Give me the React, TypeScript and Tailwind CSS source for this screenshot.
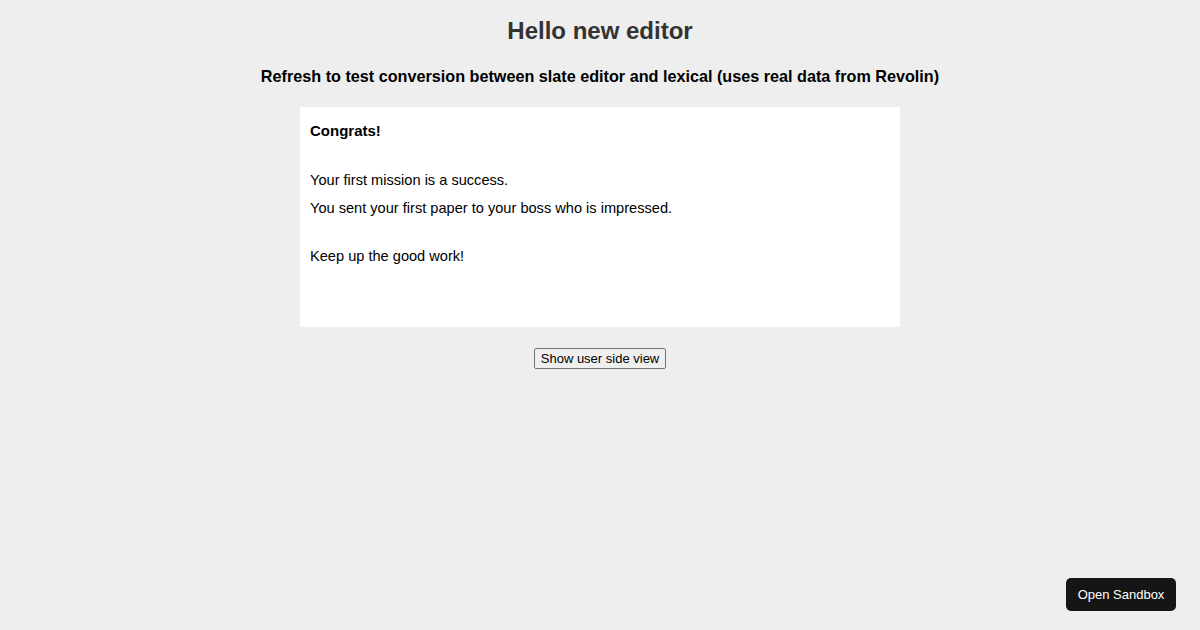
export default function App() {
  return (
    <div className="relative min-h-[630px] bg-[#eeeeee] font-['Liberation_Sans',Arial,sans-serif] text-black">
      <div className="flex flex-col items-center pt-[17px]">
        <h1 className="text-[24px] leading-[28px] font-bold text-[#333333]">Hello new editor</h1>
        <h2 className="mt-[21px] text-[16.2px] leading-[20px] font-bold">
          Refresh to test conversion between slate editor and lexical (uses real data from Revolin)
        </h2>

        {/* editor */}
        <div className="mt-[21px] w-[600px] h-[220px] bg-white px-[10px] pt-[14px] text-[14.6px] leading-[20px]">
          <p className="font-bold text-[15px]">Congrats!</p>
          <p className="mt-[29px]">Your first mission is a success.</p>
          <p className="mt-[8px]">You sent your first paper to your boss who is impressed.</p>
          <p className="mt-[28px]">Keep up the good work!</p>
        </div>

        <button className="mt-[21px] h-[21px] px-[6px] border border-[#767676] rounded-[2px] bg-[#efefef] text-[13px] leading-[15px] text-black">
          Show user side view
        </button>
      </div>

      <button className="absolute right-[24px] bottom-[19px] h-[33px] w-[110px] rounded-[5px] bg-[#151515] text-[13px] text-white">
        Open Sandbox
      </button>
    </div>
  );
}
